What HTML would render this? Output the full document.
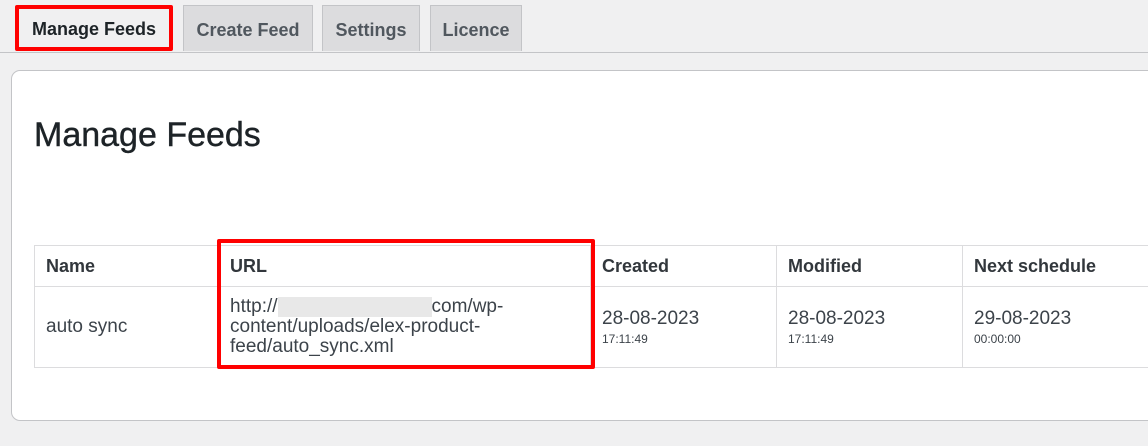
<!DOCTYPE html><html><head><style>
body{margin:0;width:1148px;height:446px;background:#f0f0f1;position:relative;overflow:hidden;font-family:"Liberation Sans",sans-serif}
.a{position:absolute}
.tab{position:absolute;top:5px;height:46px;background:#dcdcde;border:1px solid #c3c4c7;border-bottom:none;color:#50575e;box-sizing:border-box;text-align:center;line-height:48px;font-family:"Liberation Sans",sans-serif;font-weight:bold;font-size:18px}
td,th{border:1px solid #dcdcde;text-align:left;vertical-align:middle;padding:0 11px;color:#3c434a}
th{font-weight:bold;font-size:18px;height:40px;color:#32373c}
td{font-size:19px;height:80px}
small{font-size:12px;display:block;margin-top:2px}
</style></head><body>
<div class="a" style="left:0;top:52px;width:1148px;height:1px;background:#c3c4c7"></div>
<div class="tab" style="left:15px;width:158px;background:#f0f0f1;border:4px solid #f00;border-radius:2px;height:46px;line-height:40px;color:#1d2327">Manage Feeds</div>
<div class="tab" style="left:183px;width:130px">Create Feed</div>
<div class="tab" style="left:322px;width:98px">Settings</div>
<div class="tab" style="left:430px;width:92px">Licence</div>
<div class="a" style="left:11px;top:70px;width:1160px;height:349px;background:#fff;border:1px solid #c3c4c7;border-radius:9px"></div>
<div class="a" style="left:34px;top:116px;font-size:34px;color:#1d2327;font-family:'Liberation Sans',sans-serif;-webkit-text-stroke:0.4px #1d2327">Manage Feeds</div>
<table class="a" style="left:34px;top:245px;border-collapse:collapse;width:1200px">
<tr><th style="width:161px">Name</th><th style="width:349px">URL</th><th style="width:163px">Created</th><th style="width:163px">Modified</th><th>Next schedule</th></tr>
<tr><td>auto sync</td><td style="line-height:20px">http://<span style="display:inline-block;width:154px;height:20px;background:#e8e8e8;vertical-align:middle"></span>com/wp-<br>content/uploads/elex-product-<br>feed/auto_sync.xml</td><td>28-08-2023<small>17:11:49</small></td><td>28-08-2023<small>17:11:49</small></td><td>29-08-2023<small>00:00:00</small></td></tr>
</table>
<div class="a" style="left:217px;top:239px;width:370px;height:122px;border:4px solid #f00;border-radius:2px"></div>
</body></html>
